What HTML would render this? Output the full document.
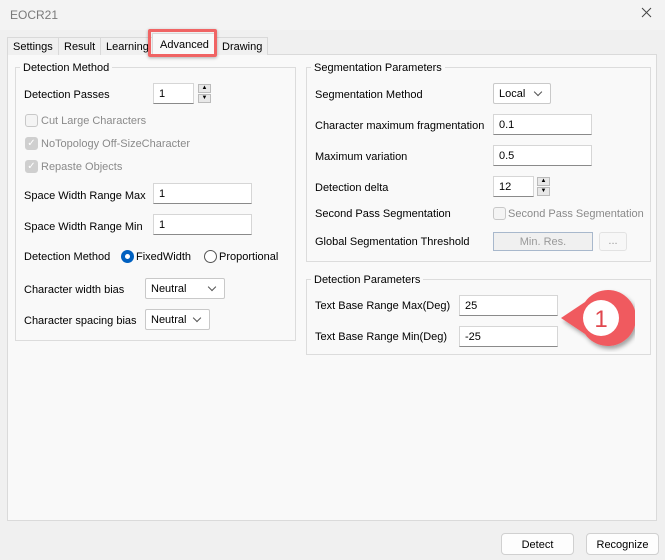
<!DOCTYPE html>
<html><head><style>
*{box-sizing:border-box;margin:0;padding:0}
body{width:665px;height:560px;background:#f0f0f0;font-family:"Liberation Sans",sans-serif;font-size:11px;color:#000;position:relative;overflow:hidden}
.a{position:absolute;white-space:nowrap}
.t{margin-top:2px}
.title{left:0;top:0;width:665px;height:30px;background:#f3f3f3}
.panel{left:7px;top:54px;width:650px;height:467px;background:#f9f9f9;border:1px solid #dadada}
.tab{top:37px;height:18px;background:#f0f0f0;border:1px solid #d9d9d9;border-bottom:none;padding:3px 5px 0}
.grp{border:1px solid #dcdcdc}
.gl{background:#f9f9f9;padding:0 3px}
.inp{background:#fff;border:1px solid #d6d6d6;border-bottom:1px solid #8a8a8a;height:21px;padding:4px 5px}
.sel{background:#fff;border:1px solid #c9c9c9;height:21px;padding:4px 5px;border-radius:2px}
.sel:after{content:"";position:absolute;right:9px;top:5px;width:5px;height:5px;border-right:1px solid #555;border-bottom:1px solid #555;transform:rotate(45deg)}
.spin{width:13px;height:9px;background:#e8e8e8;border:1px solid #bbb;font-size:6px;line-height:7px;text-align:center}
.cb{width:13px;height:13px;border:1px solid #c8c8c8;border-radius:3px;background:#f4f4f4}
.cbc{background:#cfcfcf;border-color:#cfcfcf;color:#fff;font-size:10px;line-height:11px;text-align:center}
.dis{color:#8a8a8a}
.btn{background:#fdfdfd;border:1px solid #d0d0d0;border-radius:4px;height:22px;text-align:center;padding-top:5px}
</style></head><body>
<div class="a title"></div>
<div class="a" style="left:10px;top:8px;color:#7a7a7a;font-size:12px">EOCR21</div>
<svg class="a" style="left:641px;top:7px" width="11" height="11"><path d="M1 1L10 10M10 1L1 10" stroke="#444" stroke-width="1"/></svg>

<div class="a panel"></div>
<div class="a tab" style="left:7px">Settings</div>
<div class="a tab" style="left:58px">Result</div>
<div class="a tab" style="left:100px">Learning</div>
<div class="a tab" style="left:216px">Drawing</div>
<div class="a" style="left:152px;top:33px;width:64px;height:24px;background:#f9f9f9;border:1px solid #d9d9d9;border-bottom:none"></div>
<div class="a" style="left:148px;top:29px;width:69px;height:28px;border:3px solid #f06464;border-radius:2px;box-shadow:0 1px 3px rgba(0,0,0,.3)"></div>
<div class="a" style="left:160px;top:39px">Advanced</div>

<!-- left group -->
<div class="a grp" style="left:15px;top:67px;width:281px;height:274px"></div>
<div class="a gl" style="left:20px;top:62px">Detection Method</div>
<div class="a t" style="left:24px;top:87px">Detection Passes</div>
<div class="a inp" style="left:153px;top:83px;width:41px">1</div>
<div class="a spin" style="left:198px;top:84px">▲</div>
<div class="a spin" style="left:198px;top:94px">▼</div>
<div class="a cb" style="left:25px;top:114px"></div>
<div class="a dis t" style="left:41px;top:113px">Cut Large Characters</div>
<div class="a cb cbc" style="left:25px;top:137px">✓</div>
<div class="a dis t" style="left:41px;top:136px">NoTopology Off-SizeCharacter</div>
<div class="a cb cbc" style="left:25px;top:160px">✓</div>
<div class="a dis t" style="left:41px;top:159px">Repaste Objects</div>
<div class="a t" style="left:24px;top:188px">Space Width Range Max</div>
<div class="a inp" style="left:153px;top:183px;width:99px">1</div>
<div class="a t" style="left:24px;top:219px">Space Width Range Min</div>
<div class="a inp" style="left:153px;top:214px;width:99px">1</div>
<div class="a t" style="left:24px;top:249px">Detection Method</div>
<div class="a" style="left:121px;top:250px;width:13px;height:13px;border-radius:50%;background:#0060c0"><div style="position:absolute;left:4px;top:4px;width:5px;height:5px;border-radius:50%;background:#fff"></div></div>
<div class="a t" style="left:136px;top:249px">FixedWidth</div>
<div class="a" style="left:204px;top:250px;width:13px;height:13px;border-radius:50%;border:1px solid #555;background:#fff"></div>
<div class="a t" style="left:219px;top:249px">Proportional</div>
<div class="a t" style="left:24px;top:282px">Character width bias</div>
<div class="a sel" style="left:145px;top:278px;width:80px">Neutral</div>
<div class="a t" style="left:24px;top:313px">Character spacing bias</div>
<div class="a sel" style="left:145px;top:309px;width:65px">Neutral</div>

<!-- right group -->
<div class="a grp" style="left:306px;top:67px;width:345px;height:195px"></div>
<div class="a gl" style="left:311px;top:62px">Segmentation Parameters</div>
<div class="a t" style="left:315px;top:87px">Segmentation Method</div>
<div class="a sel" style="left:493px;top:83px;width:58px">Local</div>
<div class="a t" style="left:315px;top:118px">Character maximum fragmentation</div>
<div class="a inp" style="left:493px;top:114px;width:99px">0.1</div>
<div class="a t" style="left:315px;top:149px">Maximum variation</div>
<div class="a inp" style="left:493px;top:145px;width:99px">0.5</div>
<div class="a t" style="left:315px;top:180px">Detection delta</div>
<div class="a inp" style="left:493px;top:176px;width:41px">12</div>
<div class="a spin" style="left:537px;top:177px">▲</div>
<div class="a spin" style="left:537px;top:187px">▼</div>
<div class="a t" style="left:315px;top:206px">Second Pass Segmentation</div>
<div class="a cb" style="left:493px;top:207px"></div>
<div class="a dis t" style="left:508px;top:206px">Second Pass Segmentation</div>
<div class="a t" style="left:315px;top:234px">Global Segmentation Threshold</div>
<div class="a" style="left:493px;top:232px;width:100px;height:19px;border:1px solid #a8b8cc;background:#f0f0f0;color:#999;text-align:center;padding-top:3px">Min. Res.</div>
<div class="a" style="left:599px;top:232px;width:28px;height:19px;border:1px solid #e2e2e2;border-radius:3px;background:#f7f7f7;color:#999;text-align:center;padding-top:2px">...</div>

<div class="a grp" style="left:306px;top:279px;width:345px;height:76px"></div>
<div class="a gl" style="left:311px;top:274px">Detection Parameters</div>
<div class="a t" style="left:315px;top:298px">Text Base Range Max(Deg)</div>
<div class="a inp" style="left:459px;top:295px;width:99px">25</div>
<div class="a t" style="left:315px;top:329px">Text Base Range Min(Deg)</div>
<div class="a inp" style="left:459px;top:326px;width:99px">-25</div>

<svg class="a" style="left:555px;top:288px" width="80" height="70">
<defs><filter id="s"><feDropShadow dx="2" dy="3" stdDeviation="2" flood-opacity=".35"/></filter></defs>
<path d="M6 30 L30 14 A28 28 0 1 1 30 46 Z" fill="#f05a5f" filter="url(#s)"/>
<circle cx="46" cy="30" r="18" fill="#fff"/>
<text x="46" y="39" text-anchor="middle" font-family="Liberation Sans" font-size="24" fill="#e0474e">1</text>
</svg>

<div class="a btn" style="left:501px;top:533px;width:73px">Detect</div>
<div class="a btn" style="left:586px;top:533px;width:73px">Recognize</div>
</body></html>
